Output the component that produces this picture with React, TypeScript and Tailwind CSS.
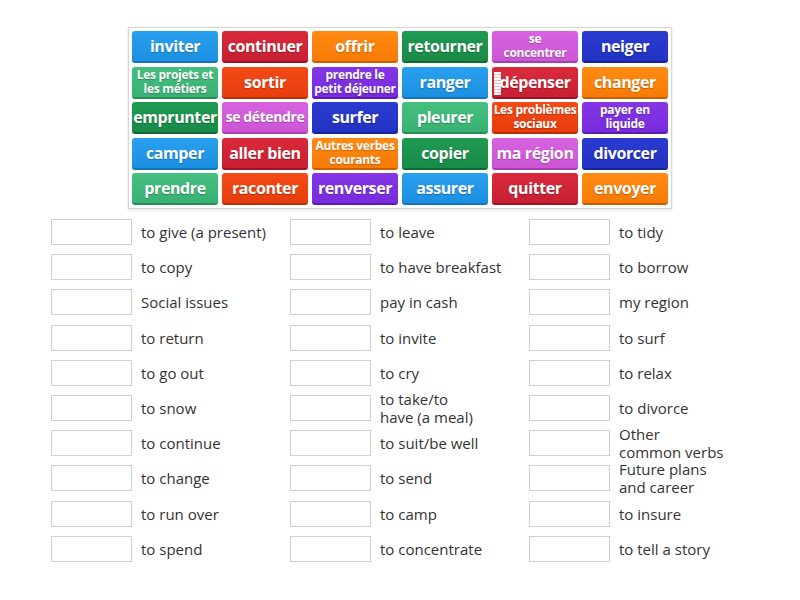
import React from 'react'

type Tile = { label: string; color: string; size?: 'sm' | 'md'; mark?: boolean }

// tile colours, top/bottom of the gradient plus the darker lower edge
const C = {
  blue: 'bg-gradient-to-b from-[#2aa0f0] to-[#1b8fe0] border-b-[#1574b8]',
  crimson: 'bg-gradient-to-b from-[#d92a3c] to-[#c81f32] border-b-[#9c1424]',
  orange: 'bg-gradient-to-b from-[#ff8a12] to-[#f77b06] border-b-[#c85f00]',
  dgreen: 'bg-gradient-to-b from-[#1f9a52] to-[#198a47] border-b-[#116a35]',
  magenta: 'bg-gradient-to-b from-[#d763e0] to-[#cc55d6] border-b-[#a63fb0]',
  navy: 'bg-gradient-to-b from-[#2a3cd0] to-[#2232c2] border-b-[#17239a]',
  mgreen: 'bg-gradient-to-b from-[#45bf80] to-[#38b173] border-b-[#278c58]',
  redorange: 'bg-gradient-to-b from-[#f34a17] to-[#e83d0c] border-b-[#b82e06]',
  purple: 'bg-gradient-to-b from-[#8436e6] to-[#772bdc] border-b-[#5a1db0]',
}

const tiles: Tile[] = [
  { label: 'inviter', color: C.blue },
  { label: 'continuer', color: C.crimson },
  { label: 'offrir', color: C.orange },
  { label: 'retourner', color: C.dgreen },
  { label: 'se concentrer', color: C.magenta, size: 'sm' },
  { label: 'neiger', color: C.navy },

  { label: 'Les projets et les métiers', color: C.mgreen, size: 'sm' },
  { label: 'sortir', color: C.redorange },
  { label: 'prendre le petit déjeuner', color: C.purple, size: 'sm' },
  { label: 'ranger', color: C.blue },
  { label: 'dépenser', color: C.crimson, mark: true },
  { label: 'changer', color: C.orange },

  { label: 'emprunter', color: C.dgreen },
  { label: 'se détendre', color: C.magenta, size: 'md' },
  { label: 'surfer', color: C.navy },
  { label: 'pleurer', color: C.mgreen },
  { label: 'Les problèmes sociaux', color: C.redorange, size: 'sm' },
  { label: 'payer en liquide', color: C.purple, size: 'sm' },

  { label: 'camper', color: C.blue },
  { label: 'aller bien', color: C.crimson },
  { label: 'Autres verbes courants', color: C.orange, size: 'sm' },
  { label: 'copier', color: C.dgreen },
  { label: 'ma région', color: C.magenta },
  { label: 'divorcer', color: C.navy },

  { label: 'prendre', color: C.mgreen },
  { label: 'raconter', color: C.redorange },
  { label: 'renverser', color: C.purple },
  { label: 'assurer', color: C.blue },
  { label: 'quitter', color: C.crimson },
  { label: 'envoyer', color: C.orange },
]

const columns: string[][] = [
  [
    'to give (a present)',
    'to copy',
    'Social issues',
    'to return',
    'to go out',
    'to snow',
    'to continue',
    'to change',
    'to run over',
    'to spend',
  ],
  [
    'to leave',
    'to have breakfast',
    'pay in cash',
    'to invite',
    'to cry',
    'to take/to have (a meal)',
    'to suit/be well',
    'to send',
    'to camp',
    'to concentrate',
  ],
  [
    'to tidy',
    'to borrow',
    'my region',
    'to surf',
    'to relax',
    'to divorce',
    'Other common verbs',
    'Future plans and career',
    'to insure',
    'to tell a story',
  ],
]

// wrapped labels need an explicit break where the picture has one
const wrapped: Record<string, [string, string]> = {
  'to take/to have (a meal)': ['to take/to', 'have (a meal)'],
  'Other common verbs': ['Other', 'common verbs'],
  'Future plans and career': ['Future plans', 'and career'],
  'se concentrer': ['se', 'concentrer'],
  'Les projets et les métiers': ['Les projets et', 'les métiers'],
  'prendre le petit déjeuner': ['prendre le', 'petit déjeuner'],
  'Les problèmes sociaux': ['Les problèmes', 'sociaux'],
  'payer en liquide': ['payer en', 'liquide'],
  'Autres verbes courants': ['Autres verbes', 'courants'],
}

function Lines({ text }: { text: string }) {
  const w = wrapped[text]
  if (!w) return <>{text}</>
  return (
    <>
      {w[0]}
      <br />
      {w[1]}
    </>
  )
}

function TileBox({ tile }: { tile: Tile }) {
  const textCls =
    tile.size === 'sm'
      ? 'text-[12px] leading-[14px] tracking-[-0.3px]'
      : tile.size === 'md'
        ? 'text-[14px] leading-none tracking-[-0.4px]'
        : 'text-[16px] leading-none tracking-[-0.4px]'
  return (
    <div
      className={`relative flex h-[32px] w-[86px] items-center justify-center overflow-hidden rounded-[3px] border-b-2 text-center text-white ${tile.color}`}
    >
      {tile.mark && (
        <div className="absolute left-[2px] top-[5px] h-[23px] w-[7px] bg-[repeating-linear-gradient(180deg,#ffffff_0px,#ffffff_2px,#f0b7bf_2px,#f0b7bf_3px)]" />
      )}
      <span
        className={`whitespace-nowrap font-bold [text-shadow:0_1px_1px_rgba(0,0,0,0.25)] ${textCls}`}
      >
        <Lines text={tile.label} />
      </span>
    </div>
  )
}

export default function App() {
  return (
    <div className="flex min-h-[600px] w-[800px] flex-col items-center bg-white pt-[27px] font-['Open_Sans',sans-serif]">
      <div className="grid grid-cols-6 gap-x-[4px] gap-y-[3.5px] border border-[#d6d6d6] p-[3px] shadow-[0_1px_3px_rgba(0,0,0,0.12)]">
        {tiles.map((t) => (
          <TileBox key={t.label} tile={t} />
        ))}
      </div>

      <div className="mt-[10px] grid w-full grid-cols-[239px_239px_239px] pl-[51px]">
        {columns.map((col, ci) => (
          <div key={ci} className="flex flex-col gap-[9.2px]">
            {col.map((text) => (
              <div key={text} className="flex h-[26px] items-center gap-[9px]">
                <div className="h-[26px] w-[81px] shrink-0 border border-[#cfcfcf] bg-white" />
                <div className="whitespace-nowrap text-[15px] leading-[18px] text-[#333333]">
                  <Lines text={text} />
                </div>
              </div>
            ))}
          </div>
        ))}
      </div>
    </div>
  )
}
